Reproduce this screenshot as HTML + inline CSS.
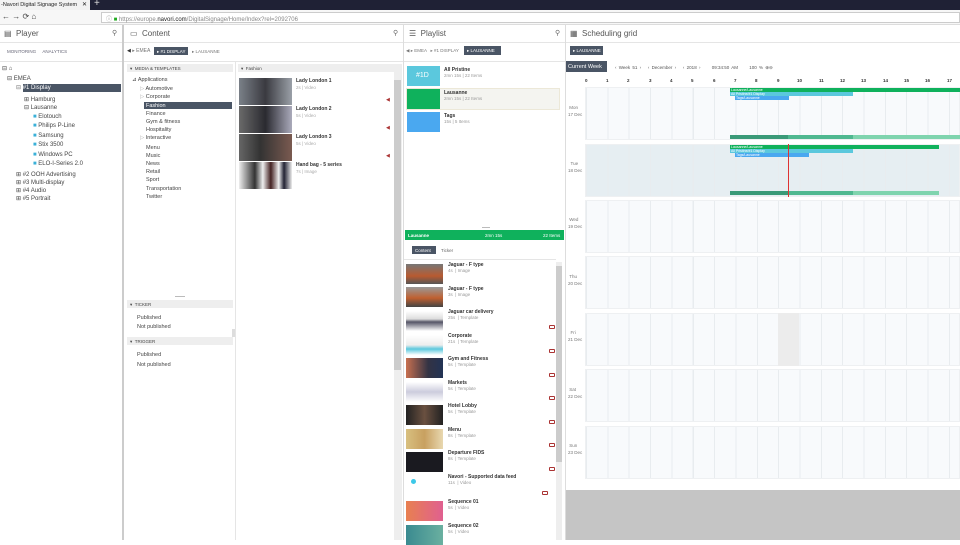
<!DOCTYPE html>
<html><head><meta charset="utf-8"><style>
*{margin:0;padding:0;box-sizing:border-box}
body{width:960px;height:540px;overflow:hidden;background:#fff;font-family:"Liberation Sans",sans-serif;color:#333;position:relative;font-size:6px}
.a{position:absolute}
.t{position:absolute;white-space:nowrap}
.grid{position:absolute;left:585px;width:375px;height:53px;background-color:#f8fafc;background-image:repeating-linear-gradient(90deg,#e8ecef 0 1px,transparent 1px 21.35px);border:1px solid #eef0f2}
.thumb{position:absolute;left:406px;width:37px;height:20px}
.pi{position:absolute;left:448px;font-size:5px;font-weight:bold;color:#333}
.ps{position:absolute;left:448px;font-size:4.5px;color:#999}
.ico{position:absolute;left:549px;width:6px;height:4px;border:1px solid #a33;border-radius:1px}
</style></head><body>
<!-- browser -->
<div class="a" style="left:0;top:0;width:960px;height:10px;background:#1f2135"></div>
<div class="a" style="left:0;top:0;width:90px;height:10px;background:#f2f2f2"></div>
<div class="t" style="left:1px;top:1.5px;font-size:5.5px;color:#222">-Navori Digital Signage System</div>
<div class="t" style="left:82px;top:1px;font-size:6px;color:#222">✕</div>
<div class="t" style="left:94px;top:-2px;font-size:10px;color:#ddd">+</div>
<div class="a" style="left:0;top:10px;width:960px;height:15px;background:#f7f7f7;border-bottom:1px solid #ddd"></div>
<div class="t" style="left:2px;top:12px;font-size:8px;color:#444">←  →  ⟳  ⌂</div>
<div class="a" style="left:101px;top:12px;width:859px;height:11px;background:#fff;border:1px solid #ccc"></div>
<div class="t" style="left:106px;top:14px;font-size:6px;color:#888">ⓘ <span style="color:#2a2">■</span> https://europe.<span style="color:#222">navori.com</span>/DigitalSignage/Home/Index?rel=2092706</div>

<!-- Player panel -->
<div class="a" style="left:122px;top:25px;width:2px;height:515px;background:#ccc"></div>
<div class="t" style="left:4px;top:29px;font-size:8px;color:#555">▤ &nbsp;Player</div>
<div class="t" style="left:112px;top:29px;font-size:7px;color:#666">⚲</div>
<div class="a" style="left:0;top:42px;width:122px;height:1px;background:#e5e5e5"></div>
<div class="t" style="left:7px;top:49px;font-size:4.5px;color:#667">MONITORING &nbsp;&nbsp;&nbsp;&nbsp;ANALYTICS</div>
<div class="a" style="left:0;top:61px;width:122px;height:1px;background:#e5e5e5"></div>
<div class="t" style="left:2px;top:65px;font-size:6px;color:#444">⊟ ⌂</div>
<div class="t" style="left:7px;top:75px;font-size:6px;color:#444">⊟ EMEA</div>
<div class="a" style="left:23px;top:84px;width:98px;height:8px;background:#4a5565"></div>
<div class="t" style="left:16px;top:84px;font-size:6px;color:#fff"><span style="color:#777">⊟</span> #1 Display</div>
<div class="t" style="left:24px;top:96px;font-size:6px;color:#444">⊞ Hamburg</div>
<div class="t" style="left:24px;top:104px;font-size:6px;color:#444">⊟ Lausanne</div>
<div class="t" style="left:33px;top:113px;font-size:6px;color:#444;line-height:9.4px"><span style="color:#3ab0d8">■</span> Elotouch<br><span style="color:#3ab0d8">■</span> Philips P-Line<br><span style="color:#3ab0d8">■</span> Samsung<br><span style="color:#3ab0d8">■</span> Stix 3500<br><span style="color:#3ab0d8">■</span> Windows PC<br><span style="color:#3ab0d8">■</span> ELO-I-Series 2.0</div>
<div class="t" style="left:16px;top:171px;font-size:6px;color:#444;line-height:8px">⊞ #2 OOH Advertising<br>⊞ #3 Multi-display<br>⊞ #4 Audio<br>⊞ #5 Portrait</div>

<!-- Content panel -->
<div class="t" style="left:130px;top:29px;font-size:8px;color:#555">▭ &nbsp;Content</div>
<div class="t" style="left:393px;top:29px;font-size:7px;color:#666">⚲</div>
<div class="a" style="left:124px;top:42px;width:279px;height:1px;background:#e5e5e5"></div>
<div class="t" style="left:127px;top:48px;font-size:5px;color:#333">◀ <span style="color:#777">▸ EMEA</span></div>
<div class="a" style="left:154px;top:47px;width:34px;height:8px;background:#4a5565"></div>
<div class="t" style="left:157px;top:48.5px;font-size:4.5px;color:#fff">▸ #1 DISPLAY</div>
<div class="t" style="left:192px;top:48.5px;font-size:4.5px;color:#777">▸ LAUSANNE</div>
<div class="a" style="left:124px;top:61px;width:279px;height:1px;background:#e5e5e5"></div>
<div class="a" style="left:127px;top:64px;width:106px;height:8px;background:#eee"></div>
<div class="t" style="left:130px;top:65.5px;font-size:4.5px;color:#444">▾ &nbsp;MEDIA &amp; TEMPLATES</div>
<div class="a" style="left:235px;top:62px;width:1px;height:478px;background:#e5e5e5"></div>
<div class="a" style="left:238px;top:64px;width:164px;height:8px;background:#eee"></div>
<div class="t" style="left:241px;top:65.5px;font-size:4.5px;color:#444">▾ &nbsp;Fashion</div>
<div class="t" style="left:132px;top:77px;font-size:5.5px;color:#444">⊿ Applications</div>
<div class="t" style="left:140px;top:85px;font-size:5.5px;color:#444;line-height:8.2px"><span style="color:#aaa">▷</span> Automotive<br><span style="color:#aaa">▷</span> Corporate</div>
<div class="a" style="left:144px;top:102px;width:88px;height:7px;background:#4a5565"></div>
<div class="t" style="left:146px;top:102.5px;font-size:5.5px;color:#fff">Fashion</div>
<div class="t" style="left:146px;top:110px;font-size:5.5px;color:#444;line-height:8.2px">Finance<br>Gym &amp; fitness<br>Hospitality</div>
<div class="t" style="left:140px;top:135px;font-size:5.5px;color:#444"><span style="color:#aaa">▷</span> Interactive</div>
<div class="t" style="left:146px;top:143.5px;font-size:5.5px;color:#444;line-height:8.2px">Menu<br>Music<br>News<br>Retail<br>Sport<br>Transportation<br>Twitter</div>
<div class="a" style="left:175px;top:296px;width:10px;height:1px;background:#bbb"></div>
<div class="a" style="left:127px;top:300px;width:106px;height:8px;background:#eee"></div>
<div class="t" style="left:130px;top:301.5px;font-size:4.5px;color:#444">▾ &nbsp;TICKER</div>
<div class="t" style="left:137px;top:314px;font-size:5.5px;color:#444;line-height:9px">Published<br>Not published</div>
<div class="a" style="left:232px;top:329px;width:3px;height:8px;background:#ddd"></div>
<div class="a" style="left:127px;top:337px;width:106px;height:8px;background:#eee"></div>
<div class="t" style="left:130px;top:338.5px;font-size:4.5px;color:#444">▾ &nbsp;TRIGGER</div>
<div class="t" style="left:137px;top:351px;font-size:5.5px;color:#444;line-height:9.5px">Published<br>Not published</div>
<!-- fashion thumbs -->
<div class="a" style="left:239px;top:78px;width:53px;height:27px;background:linear-gradient(90deg,#7a8088,#3a3a40 50%,#9aa0a8)"></div>
<div class="a" style="left:239px;top:106px;width:53px;height:27px;background:linear-gradient(90deg,#6a6a6a,#2a2a30 50%,#aab)"></div>
<div class="a" style="left:239px;top:134px;width:53px;height:27px;background:linear-gradient(90deg,#666,#333 40%,#7a5a50)"></div>
<div class="a" style="left:239px;top:162px;width:53px;height:27px;background:linear-gradient(90deg,#eee,#333 30%,#eee 45%,#422 60%,#eee 75%,#223 85%,#eee)"></div>
<div class="t" style="left:296px;top:78px;font-size:5px;font-weight:bold;color:#333">Lady London 1</div><div class="t" style="left:296px;top:85px;font-size:4.5px;color:#aaa">2s | Video</div>
<div class="t" style="left:296px;top:106px;font-size:5px;font-weight:bold;color:#333">Lady London 2</div><div class="t" style="left:296px;top:113px;font-size:4.5px;color:#aaa">5s | Video</div>
<div class="t" style="left:296px;top:134px;font-size:5px;font-weight:bold;color:#333">Lady London 3</div><div class="t" style="left:296px;top:141px;font-size:4.5px;color:#aaa">5s | Video</div>
<div class="t" style="left:296px;top:162px;font-size:5px;font-weight:bold;color:#333">Hand bag - 5 series</div><div class="t" style="left:296px;top:169px;font-size:4.5px;color:#aaa">7s | Image</div>
<div class="t" style="left:386px;top:97px;font-size:5px;color:#a33">◀</div>
<div class="t" style="left:386px;top:125px;font-size:5px;color:#a33">◀</div>
<div class="t" style="left:386px;top:153px;font-size:5px;color:#a33">◀</div>
<div class="a" style="left:394px;top:72px;width:8px;height:468px;background:#eee"></div>
<div class="a" style="left:394px;top:80px;width:7px;height:290px;background:#ccc"></div>
<div class="a" style="left:403px;top:25px;width:1px;height:515px;background:#ddd"></div>

<!-- Playlist -->
<div class="t" style="left:409px;top:29px;font-size:8px;color:#555">☰ &nbsp;Playlist</div>
<div class="t" style="left:555px;top:29px;font-size:7px;color:#666">⚲</div>
<div class="a" style="left:404px;top:42px;width:161px;height:1px;background:#e5e5e5"></div>
<div class="t" style="left:406px;top:48px;font-size:4.5px;color:#777">◀ ▸ EMEA &nbsp;&nbsp;▸ #1 DISPLAY</div>
<div class="a" style="left:464px;top:46px;width:37px;height:9px;background:#4a5565"></div>
<div class="t" style="left:467px;top:48px;font-size:4.5px;color:#fff">▸ LAUSANNE</div>
<div class="a" style="left:404px;top:61px;width:161px;height:1px;background:#e5e5e5"></div>
<div class="a" style="left:407px;top:66px;width:33px;height:20px;background:#5bc8dd"></div>
<div class="t" style="left:416px;top:72px;font-size:7px;color:#fff">#1D</div>
<div class="t" style="left:444px;top:67px;font-size:5px;font-weight:bold">All Pristine</div><div class="t" style="left:444px;top:73px;font-size:4.5px;color:#999">2mn 15s | 22 Items</div>
<div class="a" style="left:406px;top:88px;width:154px;height:22px;background:#f4f4f0;border:1px solid #ece8d8"></div>
<div class="a" style="left:407px;top:89px;width:33px;height:20px;background:#0fb15c"></div>
<div class="t" style="left:444px;top:90px;font-size:5px;font-weight:bold">Lausanne</div><div class="t" style="left:444px;top:96px;font-size:4.5px;color:#999">2mn 15s | 22 Items</div>
<div class="a" style="left:407px;top:112px;width:33px;height:20px;background:#4aa8f0"></div>
<div class="t" style="left:444px;top:113px;font-size:5px;font-weight:bold">Tags</div><div class="t" style="left:444px;top:119px;font-size:4.5px;color:#999">15s | 5 Items</div>
<div class="a" style="left:482px;top:227px;width:8px;height:1px;background:#bbb"></div>
<div class="a" style="left:405px;top:230px;width:159px;height:10px;background:#0fb15c"></div>
<div class="t" style="left:408px;top:232.5px;font-size:4.5px;color:#fff;font-weight:bold">Lausanne</div>
<div class="t" style="left:485px;top:232.5px;font-size:4.5px;color:#fff">2mn 15s</div>
<div class="t" style="left:543px;top:232.5px;font-size:4.5px;color:#fff">22 Items</div>
<div class="a" style="left:412px;top:246px;width:24px;height:8px;background:#4a5565"></div>
<div class="t" style="left:415px;top:247.5px;font-size:4.5px;color:#fff">Content</div>
<div class="t" style="left:441px;top:247.5px;font-size:4.5px;color:#666">Ticker</div>
<div class="a" style="left:404px;top:259px;width:152px;height:1px;background:#e5e5e5"></div>
<div class="a" style="left:556px;top:262px;width:6px;height:278px;background:#eee"></div>
<div class="a" style="left:556px;top:266px;width:6px;height:196px;background:#ccc"></div>
<div class="a" style="left:565px;top:25px;width:1px;height:515px;background:#ddd"></div>

<div class="thumb" style="top:264px;background:linear-gradient(#777,#b85a30 60%,#555)"></div>
<div class="pi" style="top:262px">Jaguar - F type</div><div class="ps" style="top:268px">4s &nbsp;| Image</div>
<div class="thumb" style="top:287px;background:linear-gradient(#999,#c06030 55%,#444)"></div>
<div class="pi" style="top:286px">Jaguar - F type</div><div class="ps" style="top:292px">3s &nbsp;| Image</div>
<div class="thumb" style="top:311px;background:linear-gradient(#fff,#ddd 40%,#556 55%,#fff)"></div>
<div class="pi" style="top:309px">Jaguar car delivery</div><div class="ps" style="top:315px">25s &nbsp;| Template</div><div class="ico" style="top:325px"></div>
<div class="thumb" style="top:335px;background:linear-gradient(#fff,#eee 50%,#5bc8dd 70%,#fff)"></div>
<div class="pi" style="top:333px">Corporate</div><div class="ps" style="top:339px">21s &nbsp;| Template</div><div class="ico" style="top:349px"></div>
<div class="thumb" style="top:358px;background:linear-gradient(90deg,#c87050,#334 60%,#235)"></div>
<div class="pi" style="top:356px">Gym and Fitness</div><div class="ps" style="top:362px">5s &nbsp;| Template</div><div class="ico" style="top:373px"></div>
<div class="thumb" style="top:382px;background:linear-gradient(#fff,#ccd,#fff)"></div>
<div class="pi" style="top:380px">Markets</div><div class="ps" style="top:386px">5s &nbsp;| Template</div><div class="ico" style="top:396px"></div>
<div class="thumb" style="top:405px;background:linear-gradient(90deg,#222,#6a5040 50%,#222)"></div>
<div class="pi" style="top:403px">Hotel Lobby</div><div class="ps" style="top:409px">5s &nbsp;| Template</div><div class="ico" style="top:420px"></div>
<div class="thumb" style="top:429px;background:linear-gradient(90deg,#d8c080,#c8a060,#e8d8b0)"></div>
<div class="pi" style="top:427px">Menu</div><div class="ps" style="top:433px">8s &nbsp;| Template</div><div class="ico" style="top:443px"></div>
<div class="thumb" style="top:452px;background:#1a1a20"></div>
<div class="pi" style="top:450px">Departure FIDS</div><div class="ps" style="top:456px">8s &nbsp;| Template</div><div class="ico" style="top:467px"></div>
<div class="a" style="left:411px;top:479px;width:5px;height:5px;border-radius:50%;background:#3cc8e8"></div>
<div class="pi" style="top:474px">Navori - Supported data feed</div><div class="ps" style="top:480px">11s &nbsp;| Video</div><div class="ico" style="left:542px;top:491px"></div>
<div class="thumb" style="top:501px;background:linear-gradient(90deg,#e88050,#e06090)"></div>
<div class="pi" style="top:499px">Sequence 01</div><div class="ps" style="top:505px">5s &nbsp;| Video</div>
<div class="thumb" style="top:525px;background:linear-gradient(90deg,#3a8a90,#6ab0a0)"></div>
<div class="pi" style="top:523px">Sequence 02</div><div class="ps" style="top:529px">5s &nbsp;| Video</div>

<!-- Scheduling grid -->
<div class="t" style="left:570px;top:29px;font-size:8px;color:#555">▦ &nbsp;Scheduling grid</div>
<div class="a" style="left:566px;top:42px;width:394px;height:1px;background:#e5e5e5"></div>
<div class="a" style="left:570px;top:46px;width:33px;height:9px;background:#4a5565"></div>
<div class="t" style="left:573px;top:48px;font-size:4.5px;color:#fff">▸ LAUSANNE</div>
<div class="a" style="left:566px;top:61px;width:41px;height:11px;background:#4a5565"></div>
<div class="t" style="left:568px;top:63.5px;font-size:5.5px;color:#fff">Current Week</div>
<div class="t" style="left:615px;top:64.5px;font-size:4.5px;color:#555;word-spacing:1px">‹ Week 51 › &nbsp;&nbsp;‹ December › &nbsp;&nbsp;‹ 2018 › &nbsp;&nbsp;&nbsp;&nbsp;09:34:50 AM &nbsp;&nbsp;&nbsp;&nbsp;100 % ⊕⊖</div>
<div class="t" style="left:585px;top:78px;font-size:4.5px;color:#333;font-weight:bold;word-spacing:0">
<span class="t" style="left:0">0</span><span class="t" style="left:21px">1</span><span class="t" style="left:42px">2</span><span class="t" style="left:64px">3</span><span class="t" style="left:85px">4</span><span class="t" style="left:106px">5</span><span class="t" style="left:128px">6</span><span class="t" style="left:149px">7</span><span class="t" style="left:170px">8</span><span class="t" style="left:192px">9</span><span class="t" style="left:212px">10</span><span class="t" style="left:234px">11</span><span class="t" style="left:255px">12</span><span class="t" style="left:276px">13</span><span class="t" style="left:298px">14</span><span class="t" style="left:319px">15</span><span class="t" style="left:340px">16</span><span class="t" style="left:362px">17</span></div>

<div class="grid" style="top:87px"></div>
<div class="grid" style="top:144px;background-color:#e6eef2"></div>
<div class="grid" style="top:200px"></div>
<div class="grid" style="top:256px"></div>
<div class="grid" style="top:313px"></div>
<div class="a" style="left:778px;top:313px;width:21px;height:53px;background:#ececec"></div>
<div class="grid" style="top:369px"></div>
<div class="grid" style="top:426px"></div>
<div class="t" style="left:568px;top:104px;font-size:4.5px;color:#777;line-height:7px">&nbsp;Mon<br>17 Dec</div>
<div class="t" style="left:568px;top:160px;font-size:4.5px;color:#777;line-height:7px">&nbsp;&nbsp;Tue<br>18 Dec</div>
<div class="t" style="left:568px;top:216px;font-size:4.5px;color:#777;line-height:7px">&nbsp;Wed<br>19 Dec</div>
<div class="t" style="left:568px;top:273px;font-size:4.5px;color:#777;line-height:7px">&nbsp;Thu<br>20 Dec</div>
<div class="t" style="left:568px;top:329px;font-size:4.5px;color:#777;line-height:7px">&nbsp;&nbsp;Fri<br>21 Dec</div>
<div class="t" style="left:568px;top:386px;font-size:4.5px;color:#777;line-height:7px">&nbsp;Sat<br>22 Dec</div>
<div class="t" style="left:568px;top:442px;font-size:4.5px;color:#777;line-height:7px">&nbsp;Sun<br>23 Dec</div>
<!-- Mon bars -->
<div class="a" style="left:730px;top:88px;width:230px;height:4px;background:#0fb15c"></div>
<div class="t" style="left:731px;top:87.5px;font-size:3.5px;color:#fff">Lausanne/Lausanne</div>
<div class="a" style="left:730px;top:92px;width:123px;height:4px;background:#5bc8dd"></div>
<div class="t" style="left:731px;top:91.5px;font-size:3.5px;color:#fff">All Pristine/#1 Display</div>
<div class="a" style="left:735px;top:96px;width:54px;height:4px;background:#4aa8f0"></div>
<div class="t" style="left:736px;top:95.5px;font-size:3.5px;color:#fff">Tags/Lausanne</div>
<div class="a" style="left:730px;top:135px;width:230px;height:4px;background:#7fd4ae"></div>
<div class="a" style="left:730px;top:135px;width:123px;height:4px;background:#4fb890"></div>
<div class="a" style="left:730px;top:135px;width:58px;height:4px;background:#3a9a78"></div>
<!-- Tue bars -->
<div class="a" style="left:730px;top:145px;width:209px;height:4px;background:#0fb15c"></div>
<div class="t" style="left:731px;top:144.5px;font-size:3.5px;color:#fff">Lausanne/Lausanne</div>
<div class="a" style="left:730px;top:149px;width:123px;height:4px;background:#5bc8dd"></div>
<div class="t" style="left:731px;top:148.5px;font-size:3.5px;color:#fff">All Pristine/#1 Display</div>
<div class="a" style="left:735px;top:153px;width:74px;height:4px;background:#4aa8f0"></div>
<div class="t" style="left:736px;top:152.5px;font-size:3.5px;color:#fff">Tags/Lausanne</div>
<div class="a" style="left:730px;top:191px;width:209px;height:4px;background:#7fd4ae"></div>
<div class="a" style="left:730px;top:191px;width:123px;height:4px;background:#4fb890"></div>
<div class="a" style="left:730px;top:191px;width:58px;height:4px;background:#3a9a78"></div>
<div class="a" style="left:788px;top:144px;width:1px;height:53px;background:#d33"></div>
<div class="a" style="left:566px;top:490px;width:394px;height:50px;background:#c5c5c5"></div>
</body></html>
